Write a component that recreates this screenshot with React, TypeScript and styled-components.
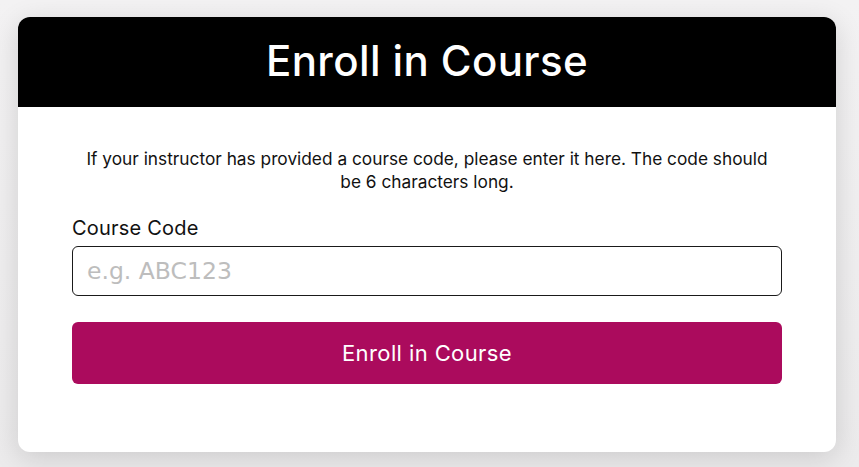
import React from 'react';
import styled, { createGlobalStyle } from 'styled-components';

const GlobalStyle = createGlobalStyle`
  html, body {
    margin: 0;
    padding: 0;
    background: #f1f0f1;
  }
  * {
    box-sizing: border-box;
  }
`;

const Page = styled.div`
  min-height: 467px;
  padding: 17px 23px 16px 18px;
  background: linear-gradient(180deg, #f3f2f3 0%, #ecebec 100%);
`;

const Card = styled.div`
  background: #ffffff;
  border-radius: 12px;
  overflow: hidden;
  box-shadow: 0 6px 28px rgba(0, 0, 0, 0.14);
`;

const Header = styled.div`
  background: #000000;
  height: 90px;
  display: flex;
  align-items: center;
  justify-content: center;
`;

const Title = styled.h1`
  margin: 0 0 3px;
  color: #ffffff;
  font-family: Inter, 'Open Sans', sans-serif;
  font-weight: 500;
  font-size: 42px;
  letter-spacing: 0.4px;
`;

const Body = styled.div`
  padding: 40px 54px 68px;
  display: flex;
  flex-direction: column;
`;

const Intro = styled.p`
  margin: 0 0 23px;
  text-align: center;
  font-family: Inter, 'Liberation Sans', sans-serif;
  font-size: 17.3px;
  line-height: 23px;
  color: #111111;
  padding: 0 6px;
`;

const Label = styled.label`
  font-family: Inter, 'Liberation Sans', sans-serif;
  font-size: 20px;
  letter-spacing: 0.2px;
  color: #111111;
  margin-bottom: 6px;
`;

const Input = styled.input`
  height: 50px;
  border: 1px solid #1a1a1a;
  border-radius: 6px;
  padding: 0 14px;
  font-family: 'DejaVu Sans', Verdana, sans-serif;
  font-size: 23.5px;
  color: #222;
  outline: none;
  margin-bottom: 26px;

  &::placeholder {
    color: #bdbdbd;
  }
`;

const Button = styled.button`
  height: 62px;
  border: none;
  border-radius: 6px;
  background: #ab0b5d;
  color: #ffffff;
  font-family: Inter, 'Liberation Sans', sans-serif;
  font-size: 22px;
  letter-spacing: 0.4px;
  cursor: pointer;
`;

const App: React.FC = () => {
  return (
    <>
      <GlobalStyle />
      <Page>
        <Card>
          <Header>
            <Title>Enroll in Course</Title>
          </Header>
          <Body>
            <Intro>
              If your instructor has provided a course code, please enter it here. The code should be 6
              characters long.
            </Intro>
            <Label htmlFor="course-code">Course Code</Label>
            <Input id="course-code" placeholder="e.g. ABC123" />
            <Button>Enroll in Course</Button>
          </Body>
        </Card>
      </Page>
    </>
  );
};

export default App;
